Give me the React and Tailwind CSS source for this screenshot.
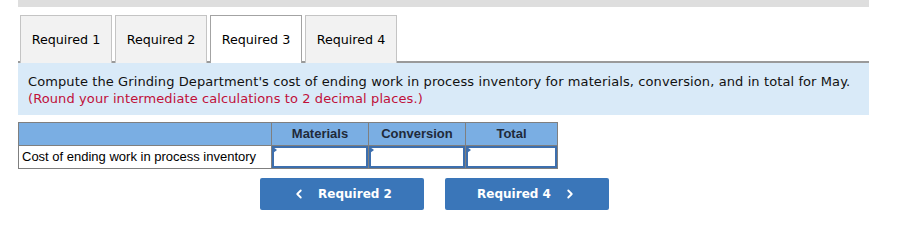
import { ChevronLeft, ChevronRight } from 'lucide-react'

const tabs = ['Required 1', 'Required 2', 'Required 3', 'Required 4']
const cols = ['Materials', 'Conversion', 'Total']

// input cell with the little blue marker in its corner
function InputCell({ w }) {
  return (
    <td className={`relative p-0 border border-[#7f7f7f] ${w}`}>
      <div className="h-[22px] border-2 border-[#3d6fae] bg-white" />
      <span className="absolute left-[1px] top-[1px] w-0 h-0 border-t-[3px] border-b-[3px] border-l-[4px] border-t-transparent border-b-transparent border-l-[#3d6fae]" />
    </td>
  )
}

export default function App() {
  return (
    <div className="w-[913px] h-[251px] bg-white font-['DejaVu_Sans',Verdana,sans-serif]">
      <div className="ml-[18px] w-[851px]">
        <div className="h-[7px] bg-[#dedede]" />

        {/* tabs */}
        <div className="flex gap-[3px] pl-[2px] mt-[8px] border-b-2 border-[#9a9a9a]">
          {tabs.map((t, i) => (
            <div
              key={t}
              className={`w-[92px] h-[48px] -mb-[2px] flex items-center justify-center text-[12.7px] text-black border ${
                i === 2
                  ? 'bg-white border-[#a3a3a3] border-b-0 relative z-10'
                  : 'bg-[#f2f2f2] border-[#c4c4c4] border-b-0'
              }`}
            >
              {t}
            </div>
          ))}
        </div>

        {/* instructions */}
        <div className="bg-[#d9eaf8] px-[10px] pt-[10px] pb-[8px] text-[13px] leading-[17px] tracking-[0.1px]">
          <div className="text-[#111]">
            Compute the Grinding Department's cost of ending work in process inventory for materials, conversion, and in total for May.
          </div>
          <div className="text-[#c0103a]">(Round your intermediate calculations to 2 decimal places.)</div>
        </div>

        {/* table */}
        <table className="mt-[7px] border-collapse font-['Liberation_Sans',Arial,sans-serif] text-[13px]">
          <thead>
            <tr className="bg-[#7aaee3] h-[23px]">
              <th className="w-[253px] border border-[#7f7f7f]" />
              {cols.map((c, i) => (
                <th
                  key={c}
                  className={`border border-[#7f7f7f] font-bold text-[#1f2a3a] text-center ${i === 2 ? 'w-[92px]' : 'w-[97px]'}`}
                >
                  {c}
                </th>
              ))}
            </tr>
          </thead>
          <tbody>
            <tr>
              <td className="border border-[#7f7f7f] px-[3px] text-left text-black leading-[22px] whitespace-nowrap">
                Cost of ending work in process inventory
              </td>
              <InputCell w="w-[97px]" />
              <InputCell w="w-[97px]" />
              <InputCell w="w-[92px]" />
            </tr>
          </tbody>
        </table>

        {/* nav buttons */}
        <div className="flex gap-[21px] ml-[242px] mt-[9px]">
          <button className="w-[164px] h-[32px] rounded-[2px] bg-[#3a76b9] text-white text-[12px] font-bold flex items-center justify-center gap-[12px]">
            <ChevronLeft size={14} strokeWidth={3.2} />
            Required 2
          </button>
          <button className="w-[164px] h-[32px] rounded-[2px] bg-[#3a76b9] text-white text-[12px] font-bold flex items-center justify-center gap-[12px]">
            Required 4
            <ChevronRight size={14} strokeWidth={3.2} />
          </button>
        </div>
      </div>
    </div>
  )
}
